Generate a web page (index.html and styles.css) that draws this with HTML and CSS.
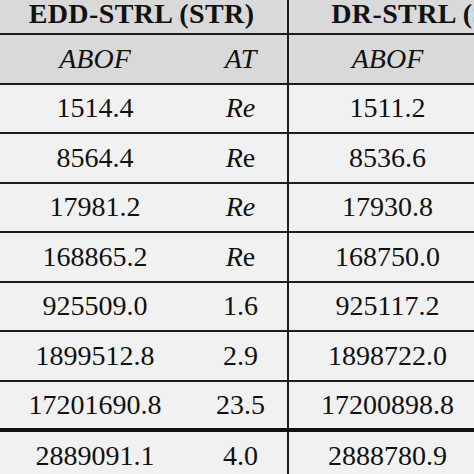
FILE: index.html
```html
<!DOCTYPE html>
<html>
<head>
<meta charset="utf-8">
<link rel="stylesheet" href="styles.css">
</head>
<body>
<table class="results">
  <colgroup>
    <col class="c-abof"><col class="c-at"><col class="c-abof"><col class="c-at">
  </colgroup>
  <tr class="head">
    <th colspan="2" class="grp">EDD-STRL (STR)</th>
    <th colspan="2" class="grp">DR-STRL (STR)</th>
  </tr>
  <tr class="sub">
    <td><i>ABOF</i></td><td class="sep"><i>AT</i></td>
    <td><i>ABOF</i></td><td><i>AT</i></td>
  </tr>
  <tr><td>1514.4</td><td class="sep"><i>Re</i></td><td>1511.2</td><td><i>Re</i></td></tr>
  <tr><td>8564.4</td><td class="sep"><i>R</i>e</td><td>8536.6</td><td><i>R</i>e</td></tr>
  <tr><td>17981.2</td><td class="sep"><i>Re</i></td><td>17930.8</td><td><i>Re</i></td></tr>
  <tr><td>168865.2</td><td class="sep"><i>R</i>e</td><td>168750.0</td><td><i>R</i>e</td></tr>
  <tr><td>925509.0</td><td class="sep">1.6</td><td>925117.2</td><td>1.6</td></tr>
  <tr><td>1899512.8</td><td class="sep">2.9</td><td>1898722.0</td><td>2.9</td></tr>
  <tr class="pre-total"><td>17201690.8</td><td class="sep">23.5</td><td>17200898.8</td><td>23.5</td></tr>
  <tr class="total"><td>2889091.1</td><td class="sep">4.0</td><td>2888780.9</td><td>4.0</td></tr>
</table>
</body>
</html>
```
FILE: styles.css
```css
html, body {
  margin: 0;
  padding: 0;
  overflow: hidden;
  background: #f1f1f1;
}
body {
  width: 474px;
  height: 474px;
}
.results {
  border-collapse: collapse;
  table-layout: fixed;
  width: 584px;
  margin-left: -4px;
  font-family: "Liberation Serif", "Times New Roman", serif;
  font-size: 28px;
  color: #111;
}
.c-abof { width: 198px; }
.c-at { width: 94px; }
.results td, .results th {
  padding: 0;
  text-align: center;
  border-top: 2px solid #1c1c1c;
  background: #f1f1f1;
}
.results i {
  font-style: italic;
}
.results tr {
  height: 49.5px;
}
.results .head {
  height: 34px;
}
.results .head th {
  border-top: none;
  font-weight: bold;
  line-height: 28px;
  letter-spacing: 0.4px;
  vertical-align: top;
  background: #d9d9d9;
}
.results .sub td {
  background: #d9d9d9;
}
.results .sep, .results .grp:first-child {
  border-right: 2px solid #1c1c1c;
}
.results .total td {
  border-top: 4px solid #111;
}
```
